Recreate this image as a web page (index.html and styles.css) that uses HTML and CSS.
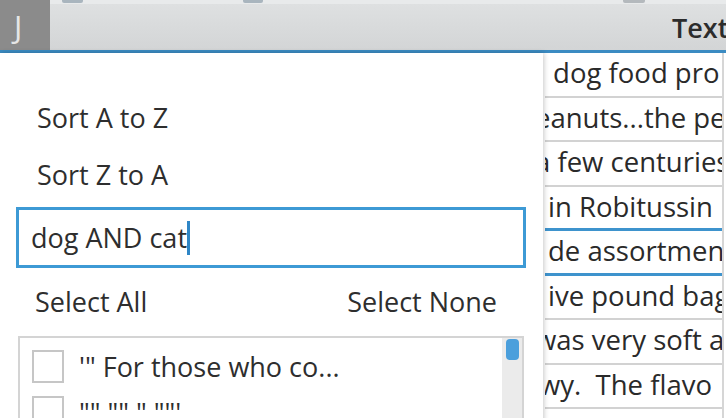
FILE: index.html
```html
<!DOCTYPE html>
<html>
<head>
<meta charset="utf-8">
<link rel="stylesheet" href="styles.css">
</head>
<body>
<div class="app">
  <header class="hdr">
    <div class="corner">J</div>
    <div class="hcell">
      <div class="strip"><span class="mark m1"></span><span class="mark m2"></span><span class="mark m3"></span></div>
      <div class="hlabel"><span class="htext">Text</span></div>
    </div>
  </header>
  <div class="grid">
    <div class="under"></div>
    <div class="tcol">
      <div class="row"><span class="cut">l</span> dog food pro</div>
      <div class="row"><span class="cut deep">e</span>anuts...the pe</div>
      <div class="row"><span class="cut deep">a</span> few centuries</div>
      <div class="row sel-top">in Robitussin</div>
      <div class="row sel">de assortment</div>
      <div class="row">ive pound bag</div>
      <div class="row"><span class="cut deep">w</span>as very soft a</div>
      <div class="row"><span class="cut">w</span>y.&nbsp; The flavo</div>
    </div>
  </div>
  <div class="popup">
    <div class="item">Sort A to Z</div>
    <div class="item">Sort Z to A</div>
    <div class="search"><span class="typed">dog AND cat</span><span class="caret"></span></div>
    <div class="selects"><span>Select All</span><span>Select None</span></div>
    <div class="list">
      <div class="entries">
        <div class="entry"><span class="box"></span><span class="label">'" For those who co...</span></div>
        <div class="entry"><span class="box"></span><span class="label">"" "" " ""'&nbsp;&nbsp;&nbsp;&nbsp;&nbsp;...</span></div>
      </div>
      <div class="scroll"><span class="thumb"></span></div>
    </div>
  </div>
</div>
</body>
</html>
```

FILE: styles.css
```css
html, body {
  margin: 0;
  padding: 0;
  width: 726px;
  height: 418px;
  overflow: hidden;
  background: #ffffff;
  font-family: "Open Sans", "Noto Sans", sans-serif;
  color: #2e2e2e;
}

.app {
  position: relative;
  width: 726px;
  height: 418px;
  overflow: hidden;
}

.hdr {
  display: flex;
  height: 50px;
  border-bottom: 3px solid #3b8bc2;
}

.corner {
  width: 50px;
  flex: none;
  background: #8b8b8b;
  color: #e6e6e6;
  font-size: 31px;
  line-height: 52px;
  padding-left: 14px;
  box-sizing: border-box;
}

.hcell {
  flex: 1;
  display: flex;
  flex-direction: column;
  background: linear-gradient(#dfe1e2, #d3d5d6);
}

.strip {
  height: 4px;
  display: flex;
  background: #e8eaeb;
}

.mark {
  height: 3px;
  background: #a9b5be;
  border-radius: 0 0 2px 2px;
}

.m1 { width: 21px; margin-left: 12px; }
.m2 { width: 20px; margin-left: 160px; }
.m3 { width: 22px; margin-left: 360px; background: #b4b9bd; }

.hlabel {
  flex: 1;
  display: flex;
  align-items: center;
  padding-left: 622px;
  white-space: nowrap;
  overflow: hidden;
}

.htext {
  font-size: 27px;
  font-weight: 600;
  color: #2c2c2c;
}

.grid {
  display: flex;
  height: 365px;
}

.under {
  width: 545px;
  flex: none;
}

.tcol {
  width: 177px;
  flex: none;
  border-right: 2px solid #d6d6d6;
  overflow: hidden;
}

.row {
  height: 44.5px;
  box-sizing: border-box;
  border-bottom: 2px solid #d2d2d2;
  font-size: 27.5px;
  line-height: 40px;
  white-space: nowrap;
  padding-left: 3px;
  color: #2a2a2a;
}

.row.sel-top {
  border-bottom: 3px solid #3e93cd;
}

.row.sel {
  border-bottom: 3px solid #3e93cd;
}

.cut {
  display: inline-block;
  margin-left: -9px;
}

.cut.deep {
  margin-left: -13px;
}

.popup {
  position: absolute;
  left: 0;
  top: 53px;
  width: 543px;
  height: 380px;
  background: #ffffff;
  box-shadow: 1px 0 5px rgba(0, 0, 0, 0.22);
  padding-top: 36px;
  box-sizing: border-box;
}

.item {
  height: 57px;
  line-height: 57px;
  font-size: 27px;
  padding-left: 37px;
  color: #2e2e2e;
}

.search {
  margin: 4px 0 0 16px;
  width: 510px;
  height: 61px;
  box-sizing: border-box;
  border: 3px solid #3d9ad5;
  display: flex;
  align-items: center;
  padding-left: 12px;
  font-size: 27px;
  color: #2e2e2e;
}

.caret {
  width: 3px;
  height: 34px;
  background: #2f86c6;
}

.selects {
  display: flex;
  justify-content: space-between;
  margin: 14px 0 0 35px;
  width: 462px;
  height: 40px;
  line-height: 40px;
  font-size: 27px;
  color: #2e2e2e;
}

.list {
  margin: 14px 0 0 18px;
  width: 506px;
  height: 120px;
  box-sizing: border-box;
  border: 2px solid #d4d4d4;
  display: flex;
}

.entries {
  flex: 1;
  padding: 5px 0 0 12px;
}

.entry {
  display: flex;
  align-items: center;
  height: 46px;
}

.box {
  width: 32px;
  height: 33px;
  box-sizing: border-box;
  border: 2px solid #c6c6c6;
  background: #ffffff;
  flex: none;
}

.label {
  font-size: 27px;
  margin-left: 15px;
  white-space: nowrap;
  color: #2e2e2e;
}

.scroll {
  width: 20px;
  background: #ebebeb;
  display: flex;
  justify-content: center;
  padding-top: 1px;
}

.thumb {
  width: 13px;
  height: 21px;
  background: #4b9fdc;
  border-radius: 4px;
}
```
